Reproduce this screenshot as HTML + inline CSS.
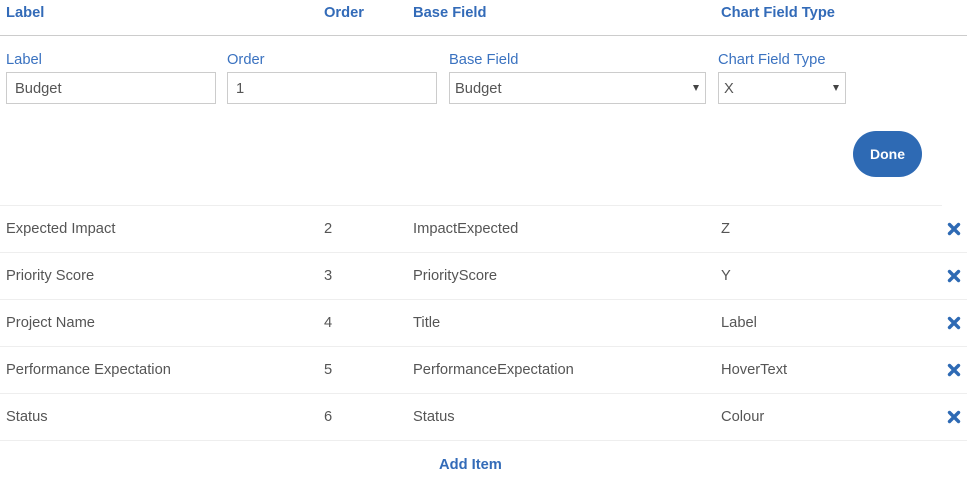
<!DOCTYPE html>
<html><head><meta charset="utf-8"><style>
*{box-sizing:border-box;margin:0;padding:0}
body{width:967px;height:485px;background:#fff;font-family:"Liberation Sans",Arial,sans-serif;font-size:14.7px;color:#555;position:relative;overflow:hidden}
.a{position:absolute;white-space:nowrap}
.h{font-weight:bold;color:#336bb8;top:5px}
.l{color:#3a72c0;top:52px}
.in{position:absolute;top:72px;height:32px;border:1px solid #ccc;padding:0 8px;line-height:32px;color:#555}
.arr{position:absolute;right:6px;top:12px;width:0;height:0;border-left:3.5px solid transparent;border-right:3.5px solid transparent;border-top:6px solid #444}
.hr{position:absolute;left:0;height:1px;background:#eee}
.x{position:absolute;left:947px}
</style></head><body>
<div class="a h" style="left:6px">Label</div>
<div class="a h" style="left:324px">Order</div>
<div class="a h" style="left:413px">Base Field</div>
<div class="a h" style="left:721px">Chart Field Type</div>
<div class="hr" style="top:35px;width:967px;background:#ccc"></div>

<div class="a l" style="left:6px">Label</div>
<div class="a l" style="left:227px">Order</div>
<div class="a l" style="left:449px">Base Field</div>
<div class="a l" style="left:718px">Chart Field Type</div>
<div class="in" style="left:6px;width:210px">Budget</div>
<div class="in" style="left:227px;width:210px">1</div>
<div class="in" style="left:449px;width:257px;padding-left:5px">Budget<span class="arr"></span></div>
<div class="in" style="left:718px;width:128px;padding-left:5px">X<span class="arr"></span></div>
<div class="a" style="left:853px;top:131px;width:69px;height:46px;border-radius:23px;background:#2e6ab4;color:#fff;font-weight:bold;font-size:14px;text-align:center;line-height:46px">Done</div>

<div class="hr" style="top:205px;width:942px"></div>
<div class="hr" style="top:252px;width:967px"></div>
<div class="hr" style="top:299px;width:967px"></div>
<div class="hr" style="top:346px;width:967px"></div>
<div class="hr" style="top:393px;width:967px"></div>
<div class="hr" style="top:440px;width:967px"></div>

<div class="a" style="left:6px;top:221px">Expected Impact</div><div class="a" style="left:324px;top:221px">2</div><div class="a" style="left:413px;top:221px">ImpactExpected</div><div class="a" style="left:721px;top:221px">Z</div>
<div class="a" style="left:6px;top:268px">Priority Score</div><div class="a" style="left:324px;top:268px">3</div><div class="a" style="left:413px;top:268px">PriorityScore</div><div class="a" style="left:721px;top:268px">Y</div>
<div class="a" style="left:6px;top:315px">Project Name</div><div class="a" style="left:324px;top:315px">4</div><div class="a" style="left:413px;top:315px">Title</div><div class="a" style="left:721px;top:315px">Label</div>
<div class="a" style="left:6px;top:362px">Performance Expectation</div><div class="a" style="left:324px;top:362px">5</div><div class="a" style="left:413px;top:362px">PerformanceExpectation</div><div class="a" style="left:721px;top:362px">HoverText</div>
<div class="a" style="left:6px;top:409px">Status</div><div class="a" style="left:324px;top:409px">6</div><div class="a" style="left:413px;top:409px">Status</div><div class="a" style="left:721px;top:409px">Colour</div>

<svg class="x" style="top:222px" width="14" height="14" viewBox="0 0 14 14"><path d="M2.5 2.5L11.5 11.5M11.5 2.5L2.5 11.5" stroke="#2e6ab4" stroke-width="3.4" stroke-linecap="round"/></svg>
<svg class="x" style="top:269px" width="14" height="14" viewBox="0 0 14 14"><path d="M2.5 2.5L11.5 11.5M11.5 2.5L2.5 11.5" stroke="#2e6ab4" stroke-width="3.4" stroke-linecap="round"/></svg>
<svg class="x" style="top:316px" width="14" height="14" viewBox="0 0 14 14"><path d="M2.5 2.5L11.5 11.5M11.5 2.5L2.5 11.5" stroke="#2e6ab4" stroke-width="3.4" stroke-linecap="round"/></svg>
<svg class="x" style="top:363px" width="14" height="14" viewBox="0 0 14 14"><path d="M2.5 2.5L11.5 11.5M11.5 2.5L2.5 11.5" stroke="#2e6ab4" stroke-width="3.4" stroke-linecap="round"/></svg>
<svg class="x" style="top:410px" width="14" height="14" viewBox="0 0 14 14"><path d="M2.5 2.5L11.5 11.5M11.5 2.5L2.5 11.5" stroke="#2e6ab4" stroke-width="3.4" stroke-linecap="round"/></svg>

<div class="a" style="left:439px;top:457px;font-weight:bold;color:#336bb8">Add Item</div>
</body></html>
